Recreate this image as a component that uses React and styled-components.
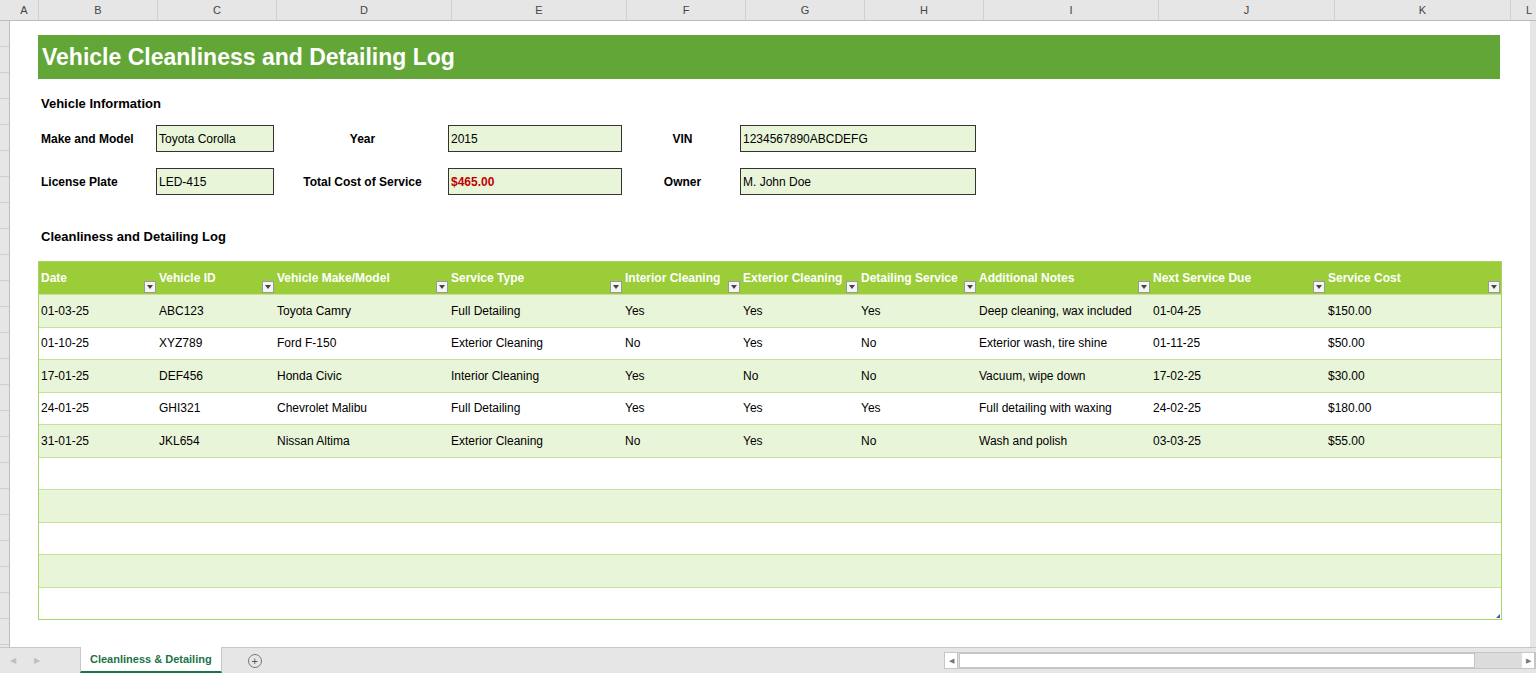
import React from "react";
import styled, { createGlobalStyle } from "styled-components";

const cols = [118, 118, 174, 174, 118, 118, 118, 174, 175, 175];
const letters = ["A", "B", "C", "D", "E", "F", "G", "H", "I", "J", "K", "L"];
const headWidths = [28, ...cols, 36];
const tpl = cols.map((c) => c + "px").join(" ");

const rows = [
  ["01-03-25", "ABC123", "Toyota Camry", "Full Detailing", "Yes", "Yes", "Yes", "Deep cleaning, wax included", "01-04-25", "$150.00"],
  ["01-10-25", "XYZ789", "Ford F-150", "Exterior Cleaning", "No", "Yes", "No", "Exterior wash, tire shine", "01-11-25", "$50.00"],
  ["17-01-25", "DEF456", "Honda Civic", "Interior Cleaning", "Yes", "No", "No", "Vacuum, wipe down", "17-02-25", "$30.00"],
  ["24-01-25", "GHI321", "Chevrolet Malibu", "Full Detailing", "Yes", "Yes", "Yes", "Full detailing with waxing", "24-02-25", "$180.00"],
  ["31-01-25", "JKL654", "Nissan Altima", "Exterior Cleaning", "No", "Yes", "No", "Wash and polish", "03-03-25", "$55.00"],
  ...Array(5).fill(Array(10).fill("")),
];
const headers = ["Date", "Vehicle ID", "Vehicle Make/Model", "Service Type", "Interior Cleaning", "Exterior Cleaning", "Detailing Service", "Additional Notes", "Next Service Due", "Service Cost"];

const Global = createGlobalStyle`
  body { margin: 0; font-family: Arial, "Liberation Sans", sans-serif; background: #fff; overflow: hidden; }
`;

const Page = styled.div`
  width: 1536px; height: 673px; display: flex; flex-direction: column;
`;
const ColBar = styled.div`
  height: 21px; display: flex; background: #e6e6e6; border-bottom: 1px solid #bdbdbd;
  padding-left: 10px; box-sizing: border-box;
`;
const ColHead = styled.div`
  flex: none; width: ${(p) => p.w}px; border-right: 1px solid #d0d0d0;
  font-size: 11px; color: #444; display: flex; align-items: center; justify-content: center;
`;
const Body = styled.div`
  flex: 1; display: flex; min-height: 0;
`;
const RowStrip = styled.div`
  width: 9px; background: #e6e6e6; border-right: 1px solid #bdbdbd;
  background-image: repeating-linear-gradient(#e6e6e6 0 25px, #cfcfcf 25px 26px);
`;
const Sheet = styled.div`
  flex: 1; padding: 14px 0 0 28px; border-right: 6px solid #e6e6e6;
`;
const Title = styled.div`
  width: 1462px; height: 44px; background: #63a638; color: #fff;
  font-size: 23px; font-weight: bold; display: flex; align-items: center; padding-left: 4px; box-sizing: border-box;
`;
const Section = styled.div`
  font-size: 13px; font-weight: bold; padding: ${(p) => p.pad}; color: #000;
`;
const Fields = styled.div`
  display: grid; grid-template-columns: ${tpl}; row-gap: 16px; margin-top: 14px;
`;
const Label = styled.div`
  font-size: 12px; font-weight: bold; display: flex; align-items: center;
  justify-content: ${(p) => (p.center ? "center" : "flex-start")}; padding-left: 3px;
`;
const Box = styled.div`
  grid-column: span ${(p) => p.span || 1}; height: 27px; background: #e9f5d9; border: 1px solid #333;
  box-sizing: border-box; font-size: 12px; display: flex; align-items: center; padding-left: 2px;
  color: ${(p) => (p.red ? "#c00000" : "#000")}; font-weight: ${(p) => (p.red ? "bold" : "normal")};
`;
const Table = styled.div`
  width: 1462px; display: grid; grid-template-columns: ${tpl}; border: 1px solid #a9d36b; position: relative;
`;
const Th = styled.div`
  height: 32px; background: #9acd37; color: #fff; font-size: 12px; font-weight: bold;
  padding: 9px 0 0 2px; box-sizing: border-box; position: relative; white-space: nowrap;
`;
const Filter = styled.span`
  position: absolute; right: 1px; bottom: 1px; width: 12px; height: 12px; background: #f4f4f4;
  border: 1px solid #9a9a9a; box-sizing: border-box; display: flex; align-items: center; justify-content: center;
  &::after { content: ""; border: 3px solid transparent; border-top: 4px solid #444; margin-top: 3px; }
`;
const Td = styled.div`
  height: 32.5px; box-sizing: border-box; font-size: 12px; display: flex; align-items: center; padding-left: 2px;
  background: ${(p) => (p.alt ? "#e9f5d9" : "#fff")}; border-top: 1px solid #c6e29b; white-space: nowrap;
`;
const Corner = styled.span`
  position: absolute; right: 1px; bottom: 1px; width: 4px; height: 4px; background: #3a5bbf;
  clip-path: polygon(100% 0, 100% 100%, 0 100%);
`;
const TabBar = styled.div`
  height: 25px; background: #e6e6e6; border-top: 1px solid #c6c6c6; display: flex; align-items: stretch;
`;
const Nav = styled.div`
  width: 70px; display: flex; align-items: center; gap: 18px; padding-left: 10px; color: #c0c0c0; font-size: 8px;
`;
const Tab = styled.div`
  background: #fff; color: #217346; font-weight: bold; font-size: 11px; padding: 0 9px;
  display: flex; align-items: center; border-bottom: 2px solid #217346; margin-top: -1px;
  border-left: 1px solid #c6c6c6; border-right: 1px solid #c6c6c6;
`;
const Plus = styled.div`
  width: 12px; height: 12px; border: 1px solid #777; border-radius: 50%; margin: auto 0 auto 26px;
  font-size: 11px; line-height: 12px; text-align: center; color: #555;
`;
const Scroll = styled.div`
  margin: 4px 0 4px auto; width: 590px; display: flex; border: 1px solid #c6c6c6; background: #dcdcdc;
`;
const ScrollBtn = styled.div`
  width: 12px; background: #fff; border-right: 1px solid #c6c6c6; font-size: 7px; color: #777;
  display: flex; align-items: center; justify-content: center;
`;
const Thumb = styled.div`
  width: 514px; background: #fff; border: 1px solid #c6c6c6; margin-left: 1px;
`;

export default function App() {
  return (
    <Page>
      <Global />
      <ColBar>
        {letters.map((l, i) => (
          <ColHead key={l} w={headWidths[i]}>{l}</ColHead>
        ))}
      </ColBar>
      <Body>
        <RowStrip />
        <Sheet>
          <Title>Vehicle Cleanliness and Detailing Log</Title>
          <Section pad="17px 0 0 3px">Vehicle Information</Section>
          <Fields>
            <Label>Make and Model</Label>
            <Box>Toyota Corolla</Box>
            <Label center>Year</Label>
            <Box>2015</Box>
            <Label center>VIN</Label>
            <Box span={2}>1234567890ABCDEFG</Box>
            <div /><div /><div />
            <Label>License Plate</Label>
            <Box>LED-415</Box>
            <Label center>Total Cost of Service</Label>
            <Box red>$465.00</Box>
            <Label center>Owner</Label>
            <Box span={2}>M. John Doe</Box>
          </Fields>
          <Section pad="34px 0 17px 3px">Cleanliness and Detailing Log</Section>
          <Table>
            {headers.map((h) => (
              <Th key={h}>{h}<Filter /></Th>
            ))}
            {rows.map((r, i) =>
              r.map((c, j) => <Td key={i + "-" + j} alt={i % 2 === 0}>{c}</Td>)
            )}
            <Corner />
          </Table>
        </Sheet>
      </Body>
      <TabBar>
        <Nav><span>◀</span><span>▶</span></Nav>
        <Tab>Cleanliness &amp; Detailing</Tab>
        <Plus>+</Plus>
        <Scroll>
          <ScrollBtn>◀</ScrollBtn>
          <Thumb />
          <div style={{ flex: 1 }} />
          <ScrollBtn>▶</ScrollBtn>
        </Scroll>
      </TabBar>
    </Page>
  );
}
